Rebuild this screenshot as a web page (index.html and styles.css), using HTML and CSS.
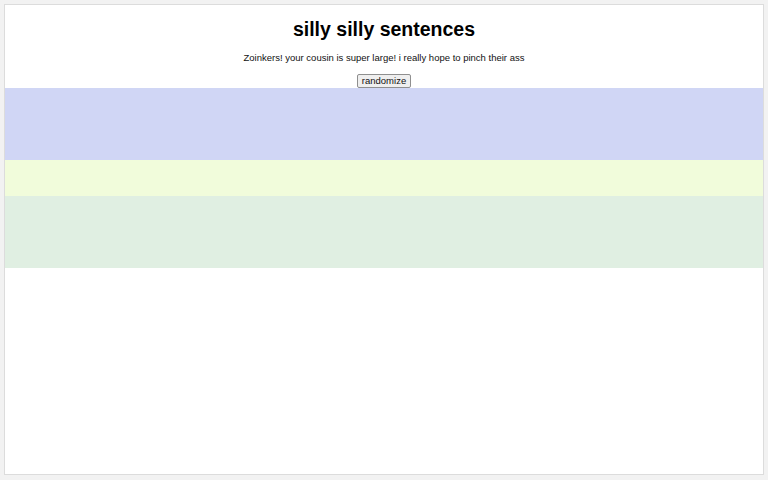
FILE: index.html
```html
<!DOCTYPE html>
<html>
<head>
<meta charset="utf-8">
<link rel="stylesheet" href="styles.css">
</head>
<body>
<div class="frame">
  <header class="head">
    <h1 class="title">silly silly sentences</h1>
    <p class="sentence">Zoinkers! your cousin is super large! i really hope to pinch their ass</p>
    <button class="btn">randomize</button>
  </header>
  <div class="band band-blue"></div>
  <div class="band band-lime"></div>
  <div class="band band-green"></div>
</div>
</body>
</html>
```
FILE: styles.css
```css
html, body {
  margin: 0;
  padding: 0;
}
body {
  background: #f2f2f2;
  padding: 4px;
  font-family: "Liberation Sans", Arial, sans-serif;
}
.frame {
  background: #fff;
  border: 1px solid #dcdcdc;
  height: 469px;
  display: flex;
  flex-direction: column;
}
.head {
  display: flex;
  flex-direction: column;
  align-items: center;
  padding-top: 13px;
}
.title {
  margin: 0;
  font-size: 19.5px;
  font-weight: bold;
  line-height: 23px;
  color: #000;
}
.sentence {
  margin: 0;
  margin-top: 11px;
  font-size: 9.5px;
  line-height: 12px;
  color: #111;
}
.btn {
  margin-top: 10px;
  font-family: "Liberation Sans", Arial, sans-serif;
  font-size: 9.5px;
  line-height: 12px;
  height: 14px;
  padding: 0 4px;
  background: #efefef;
  border: 1px solid #8f8f8f;
  border-radius: 2px;
  color: #111;
}
.band {
  flex: none;
}
.band-blue {
  height: 72px;
  background: #d0d6f5;
}
.band-lime {
  height: 36px;
  background: #f1fcdb;
}
.band-green {
  height: 72px;
  background: #e0efe2;
}
```
